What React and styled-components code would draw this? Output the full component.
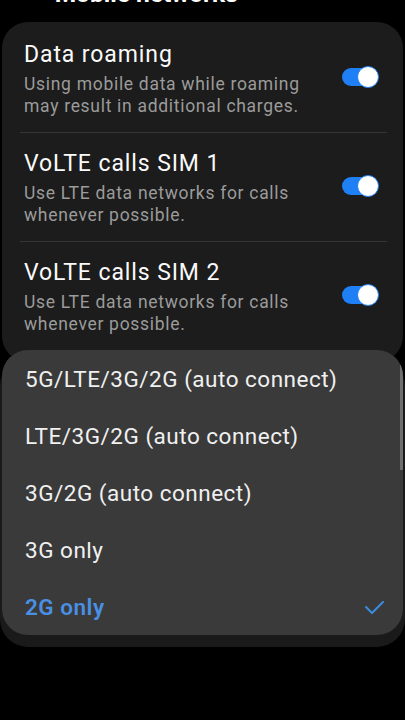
import React from "react";
import styled, { createGlobalStyle } from "styled-components";

const GlobalStyle = createGlobalStyle`
  html, body {
    margin: 0;
    padding: 0;
    background: #000;
  }
  body {
    font-family: Roboto, "Noto Sans", "Liberation Sans", sans-serif;
    -webkit-font-smoothing: antialiased;
  }
`;

const Screen = styled.div`
  position: relative;
  width: 405px;
  height: 720px;
  overflow: hidden;
  background: #000;
`;

const Header = styled.div`
  height: 22px;
  overflow: hidden;
  display: flex;
  align-items: flex-end;
`;

const HeaderInner = styled.div`
  display: flex;
  align-items: center;
  gap: 16px;
  margin-bottom: 13px;
  padding-left: 31px;
  color: #fff;
  font-size: 24.5px;
  font-weight: 700;
  line-height: 30px;
`;

const Card = styled.div`
  margin: 0 2px;
  padding: 2px 0 12px;
  background: #1c1c1c;
  border-radius: 26px;
`;

const Row = styled.div`
  display: flex;
  align-items: center;
  padding: 17px 9px 15px 4px;
  margin: 0 16px 0 18px;
  border-bottom: ${(p) => (p.$last ? "none" : "1px solid #353535")};
`;

const Texts = styled.div`
  flex: 1;
  display: flex;
  flex-direction: column;
  gap: 4px;
`;

const Title = styled.div`
  color: #fafafa;
  font-size: 23px;
  line-height: 28px;
  letter-spacing: 0.9px;
`;

const Sub = styled.div`
  color: #9b9b9b;
  font-size: 17.5px;
  line-height: 22px;
  letter-spacing: 0.7px;
`;

const Track = styled.div`
  position: relative;
  width: 36px;
  height: 18px;
  border-radius: 9px;
  background: #1f80f5;
  margin-top: -4px;
`;

const Knob = styled.div`
  position: absolute;
  right: -1px;
  top: -2px;
  width: 20px;
  height: 20px;
  border-radius: 50%;
  background: #fff;
  border: 1px solid #1f80f5;
`;

const Popup = styled.div`
  position: absolute;
  top: 350px;
  left: 2px;
  right: 2px;
  background: #3a3a3a;
  border-radius: 26px;
  box-shadow: 0 10px 0 2px #1a1a1a;
  overflow: hidden;
`;

const Option = styled.div`
  height: 57px;
  display: flex;
  align-items: center;
  justify-content: space-between;
  padding: 0 17px 0 23px;
  font-size: 22.5px;
  letter-spacing: 0.5px;
  color: ${(p) => (p.$selected ? "#4a8fe2" : "#f0f0f0")};
  font-weight: ${(p) => (p.$selected ? 600 : 400)};
`;

const CheckBox = styled.span`
  display: flex;
  margin-top: 4px;
`;

const Scrollbar = styled.div`
  position: absolute;
  top: 0;
  right: 0;
  width: 3px;
  height: 120px;
  background: #6e6e6e;
`;

const settings = [
  {
    title: "Data roaming",
    sub: ["Using mobile data while roaming", "may result in additional charges."],
  },
  {
    title: "VoLTE calls SIM 1",
    sub: ["Use LTE data networks for calls", "whenever possible."],
  },
  {
    title: "VoLTE calls SIM 2",
    sub: ["Use LTE data networks for calls", "whenever possible."],
  },
];

const options = [
  "5G/LTE/3G/2G (auto connect)",
  "LTE/3G/2G (auto connect)",
  "3G/2G (auto connect)",
  "3G only",
  "2G only",
];

const Check = () => (
  <svg width="22" height="16" viewBox="0 0 22 16" fill="none">
    <polyline
      points="2,6 8,12 19,1"
      stroke="#3d8be0"
      strokeWidth="2"
      strokeLinecap="round"
      strokeLinejoin="round"
    />
  </svg>
);

const App = () => {
  return (
    <Screen>
      <GlobalStyle />
      <Header>
        <HeaderInner>
          <span>‹</span>
          <span>Mobile networks</span>
        </HeaderInner>
      </Header>
      <Card>
        {settings.map((s, i) => (
          <Row key={s.title} $last={i === settings.length - 1}>
            <Texts>
              <Title>{s.title}</Title>
              <Sub>
                {s.sub[0]}
                <br />
                {s.sub[1]}
              </Sub>
            </Texts>
            <Track>
              <Knob />
            </Track>
          </Row>
        ))}
      </Card>
      <Popup>
        {options.map((o) => (
          <Option key={o} $selected={o === "2G only"}>
            <span>{o}</span>
            {o === "2G only" && (
              <CheckBox>
                <Check />
              </CheckBox>
            )}
          </Option>
        ))}
        <Scrollbar />
      </Popup>
    </Screen>
  );
};

export default App;
